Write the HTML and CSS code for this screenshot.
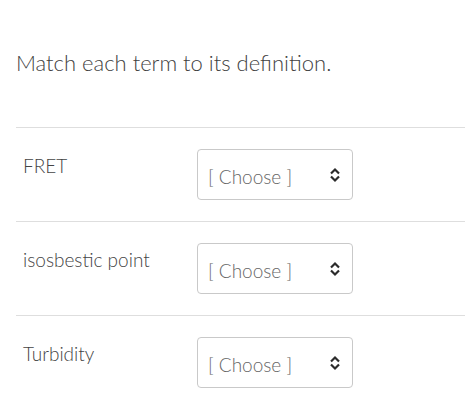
FILE: index.html
```html
<!DOCTYPE html>
<html lang="en">
<head>
    <meta charset="UTF-8">
    <meta name="viewport" content="width=device-width, initial-scale=1.0">
    <title>Match</title>
    <link rel="stylesheet" href="styles.css">
</head>
<body>
    <div class="question">
        <p class="question-text">Match each term to its definition.</p>
        <div class="answers">
            <div class="answer-row">
                <div class="term">FRET</div>
                <div class="select">
                    <span class="select-value">[ Choose ]</span>
                    <svg class="select-arrows" width="12" height="16" viewBox="0 0 12 16">
                        <path d="M2 6.5 L6 2.5 L10 6.5 M2 9.5 L6 13.5 L10 9.5" fill="none" stroke="#2b2b2b" stroke-width="2.2"/>
                    </svg>
                </div>
            </div>
            <div class="answer-row">
                <div class="term">isosbestic point</div>
                <div class="select">
                    <span class="select-value">[ Choose ]</span>
                    <svg class="select-arrows" width="12" height="16" viewBox="0 0 12 16">
                        <path d="M2 6.5 L6 2.5 L10 6.5 M2 9.5 L6 13.5 L10 9.5" fill="none" stroke="#2b2b2b" stroke-width="2.2"/>
                    </svg>
                </div>
            </div>
            <div class="answer-row">
                <div class="term">Turbidity</div>
                <div class="select">
                    <span class="select-value">[ Choose ]</span>
                    <svg class="select-arrows" width="12" height="16" viewBox="0 0 12 16">
                        <path d="M2 6.5 L6 2.5 L10 6.5 M2 9.5 L6 13.5 L10 9.5" fill="none" stroke="#2b2b2b" stroke-width="2.2"/>
                    </svg>
                </div>
            </div>
        </div>
    </div>
</body>
</html>
```

FILE: styles.css
```css
body {
    margin: 0;
    font-family: Lato, "Open Sans", sans-serif;
    font-weight: 300;
    background-color: #fff;
    color: #444;
}
.question {
    padding: 0 9px 0 16px;
}
.question-text {
    margin: 0;
    padding-top: 49px;
    height: 78px;
    font-size: 22px;
    line-height: 27px;
    color: #3f3f3f;
}
.answer-row {
    display: flex;
    align-items: flex-start;
    padding: 21px 0 21px 7px;
    border-top: 1px solid #dedede;
}
.term {
    width: 174px;
    margin-top: 5px;
    font-size: 19px;
    line-height: 23px;
    color: #444;
}
.select {
    box-sizing: border-box;
    width: 156px;
    height: 51px;
    display: flex;
    align-items: center;
    justify-content: space-between;
    padding: 4px 10px 0 10px;
    border: 1px solid #c9c9c9;
    border-radius: 4px;
}
.select-value {
    font-size: 19px;
    color: #666;
}
.select-arrows {
    margin-top: -4px;
    margin-right: 1px;
}
```
